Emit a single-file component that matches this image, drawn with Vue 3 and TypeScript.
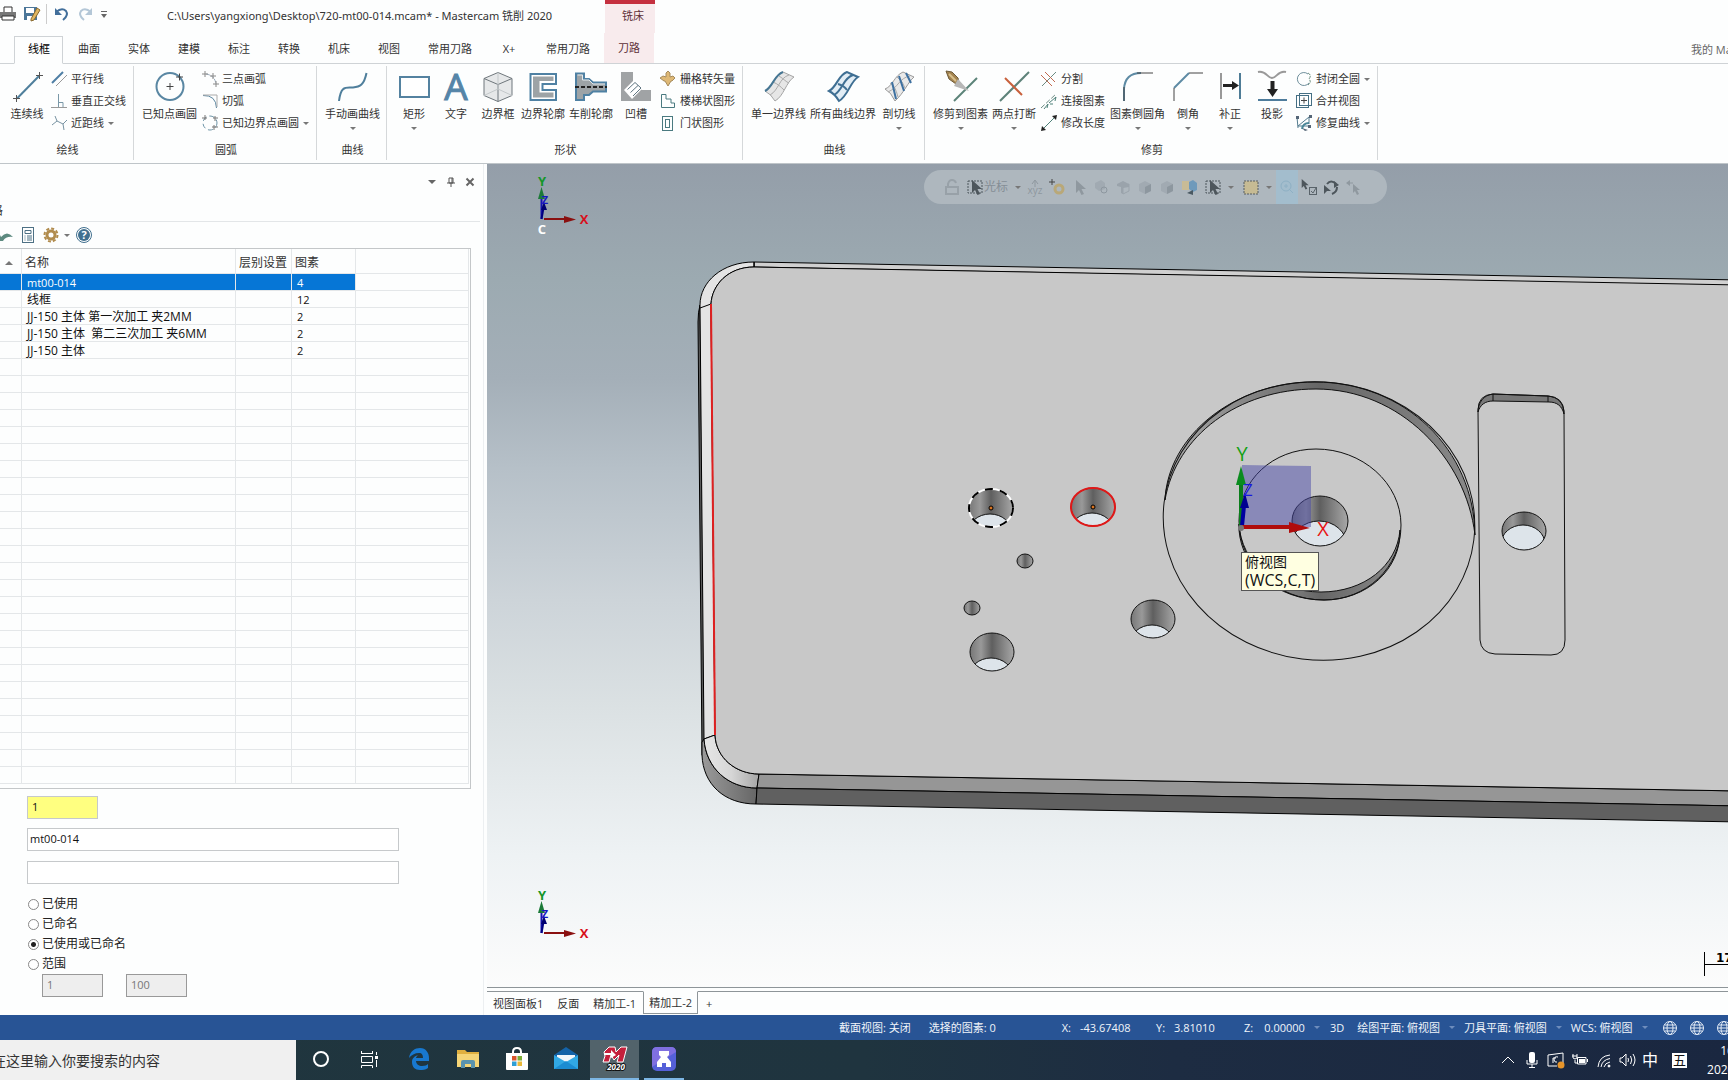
<script setup lang="ts">
import { ref } from 'vue'

interface Tool {
  label: string
  icon: string
  menu?: boolean
}
interface Block {
  kind: 'big' | 'stack'
  tools: Tool[]
}
interface Group {
  name: string
  blocks: Block[]
}

const glyphs: Record<string, string> = {
  line: '<path d="M6 28.500L28 6" stroke="#4f7f9c" stroke-width="2"/><path d="M28.500 2v7M25 5.500h7M5.500 25v7M2 28.500h7" stroke="#555"/>',
  circle: '<circle cx="16" cy="16.500" r="13.500" stroke="#5a87a3" stroke-width="2"/><path d="M16 13v7M12.500 16.500h7M25.500 3.500v7M22 7h7" stroke="#444"/>',
  spline: '<path d="M2 31C4 15 9 18 16 17.500S27 15 29.500 3" stroke="#4f7f9c" stroke-width="2"/>',
  rect: '<rect x="2" y="7" width="29" height="20" stroke="#5482a0" stroke-width="2" fill="#fff"/>',
  letter: '<text x="16" y="30" font-size="37" text-anchor="middle" font-family="Open Sans, sans-serif" fill="#5585a8" stroke="#5585a8">A</text>',
  cube: '<path d="M16 2.500L30 8.500V25.500L16 31.500L2 25.500V8.500Z" fill="#e6e8e9" stroke="#6f777c"/><path d="M2 8.500L16 14.500L30 8.500M16 14.500V31.500" stroke="#6f777c"/><path d="M2 25.500L16 19L30 25.500M16 2.500V19" stroke="#c3c8ca"/>',
  contour: '<path d="M3.500 4H29V14H15.500V20H29V30H3.500Z" fill="#fff" stroke="#4f81a3" stroke-width="2"/><path d="M6 6.500H26.500V11H12.500V22.500H26.500V27.500H6Z" fill="#9da3a6"/>',
  lathe: '<path d="M1 3.500H9V9H14L18 12.500H31V21.500H18L14 25H9V30H1Z" fill="#9da3a6" stroke="#4f81a3" stroke-width="2"/><path d="M2.500 5H7.500V10H14L18 14H30" stroke="#e4e9ec"/><path d="M0 17H32" stroke="#222" stroke-width="2" stroke-dasharray="4 2"/>',
  pocket: '<path d="M1 2H13V12L22 20H31V31H1Z" fill="#a0a3a5"/><path d="M4 20L15 9L24 17L12 29Z" fill="#fff"/><path d="M7.500 19.500L15 12.500M10.500 22.500L18 15.500M13 26L21 18M15 12.500l6 5.500" stroke="#5e7480"/>',
  edgeOne: '<path d="M2 21C10 17 11 5 20 2L31 7C23 12 21 26 12 31Q8 24 2 21Z" fill="#e6e6e6" stroke="#a4a4a4"/><path d="M7 25C16 20 16 8 26 5M10 12C15 14 18 17 21 20M16 6C21 9 23 12 26 13" stroke="#aaa"/><path d="M2 21C10 17 11 5 20 2" stroke="#467693" stroke-width="2"/>',
  edgeAll: '<path d="M2 21C10 17 11 5 20 2L31 7C23 12 21 26 12 31Q8 24 2 21Z" fill="#e2edf5" stroke="#3f6f93" stroke-width="2"/><path d="M7 25C16 20 16 8 26 5M11 14C15 15 18 17 20 20" stroke="#3f6f93" stroke-width="2"/>',
  slice: '<path d="M2 19C10 16 11 6 20 2L31 7C25 12 21 23 12 31Q8 22 2 19Z" fill="#e9e9e9" stroke="#9a9a9a"/><path d="M5 22C16 17 16 8 27 6M7 13Q12 15 15 27M14 7Q20 11 22 18" stroke="#aaa"/><path d="M9 12L13 29M16 6L21 21M23 3L28 13" stroke="#3d70a0" stroke-width="2"/>',
  trim: '<path d="M9 31L32 8" stroke="#5b8378" stroke-width="2"/><path d="M1 1L7 2L13 8L14 12L11 14L4 9Z" fill="#a48450" stroke="#6d5a38"/><path d="M13 9L24 21L9 16Z" fill="#b7b7b7"/><path d="M4 4L11 11" stroke="#d8c08c" stroke-width="2"/>',
  snap: '<path d="M2 31L31 2" stroke="#5d8279" stroke-width="2"/><path d="M7 8L24 25" stroke="#c8603c" stroke-width="2"/>',
  fillet: '<path d="M2 31V19Q3 3 19 3" stroke="#5e8ba4" stroke-width="2"/><path d="M2 31V17M15 3H31" stroke="#444"/>',
  chamfer: '<path d="M2 18L17 3" stroke="#5e8ba4" stroke-width="2"/><path d="M2 31V18M17 3H31" stroke="#444"/>',
  offset: '<path d="M7 3V29" stroke="#999" stroke-width="2"/><path d="M26 3V29" stroke="#4e7c96" stroke-width="2"/><path d="M9 14H18V11L25 15.500L18 20V17H9Z" fill="#222"/>',
  project: '<path d="M2 2C10 0 11 8 16 8S22 0 30 2" stroke="#999" stroke-width="2"/><path d="M14.500 11H18.500V19H22L16.500 27L11 19H14.500Z" fill="#222"/><path d="M2 30H31" stroke="#4e7c9c" stroke-width="2"/>',
  parallel: '<path d="M1 12L12 1" stroke="#4e7fa5" stroke-width="2"/><path d="M5 15L16 4" stroke="#999"/>',
  perp: '<path d="M0 14.500H16" stroke="#999"/><path d="M7.500 1V14M7.500 9.500H12V14" stroke="#7a98a8"/>',
  near: '<path d="M4 1L6 6L1 10M6 6L12 9M16 5L12 9L13 15" stroke="#7893a2"/>',
  arc3: '<path d="M4 3C10 4 13 7 14 13" stroke="#9ab" stroke-dasharray="4 1"/><path d="M3 0v6M0 3h6M11 2v6M8 5h6M14 10v6M11 13h6" stroke="#888"/>',
  tangent: '<path d="M1 2.500Q14 2 14.500 15" stroke="#5b86a0"/><path d="M1 2H15V14" stroke="#aaa"/>',
  edgeCircle: '<circle cx="8" cy="8" r="7" stroke="#6f95a8" stroke-dasharray="5 3"/><path d="M3 0v5M0 3h5M13 1v5M11 3h5M12 10v5M10 12h6" stroke="#777"/>',
  raster: '<path d="M8 0L10 2V6L13 5L15 7L12 10H11L8 15L5 10H4L0 7L3 5L6 6V2Z" fill="#dfb976" stroke="#a68b5c"/>',
  stairs: '<path d="M1.500 1.500V14.500H14.500V10H11V6H6V1.500Z" stroke="#4a7a80"/>',
  door: '<rect x="2.500" y="1.500" width="10" height="14" stroke="#4a7a80"/><rect x="5.500" y="4.500" width="4" height="8" stroke="#4a7a80"/>',
  divide: '<path d="M1 15L15 1" stroke="#6c8b82"/><path d="M0 4L11 15M4 1L14 11" stroke="#c0694f"/>',
  join: '<path d="M0 15L15 1" stroke="#6c8b82" stroke-dasharray="5 2"/><path d="M3 16L7 11L6 15M8 10L15 4L14 8M9 11H12" stroke="#4d8078"/>',
  length: '<path d="M2 14L14 2" stroke="#4d8078"/><path d="M0 16L1 11L5 15ZM16 0L11 1L15 5Z" fill="#222"/>',
  closeArc: '<path d="M12 3A6.500 6.500 0 1 0 13 12" stroke="#6f8f9c"/><path d="M12 2Q16 4 13 8Q16 11 12 14" stroke="#6c8f80" stroke-dasharray="3 1"/>',
  merge: '<rect x=".5" y="2.500" width="12" height="12" stroke="#456f84"/><rect x="3.500" y=".5" width="12" height="12" stroke="#456f84"/><path d="M8 4.500v6M5 7.500h6" stroke="#444"/>',
  repair: '<path d="M1 2L2 13M2 11L13 2V9M2 11H13" stroke="#557d90"/><path d="M6 14Q7 8 13 8" stroke="#4a8698" stroke-width="2"/><path d="M0 1h3v3h-3zM13 0h3v3h-3zM12 10h3v3h-3zM6 13l6 2l-3 1z" fill="#567"/>',
}

const groups: Group[] = [
  {
    name: '绘线',
    blocks: [
      { kind: 'big', tools: [{ label: '连续线', icon: 'line' }] },
      { kind: 'stack', tools: [{ label: '平行线', icon: 'parallel' }, { label: '垂直正交线', icon: 'perp' }, { label: '近距线', icon: 'near', menu: true }] },
    ],
  },
  {
    name: '圆弧',
    blocks: [
      { kind: 'big', tools: [{ label: '已知点画圆', icon: 'circle' }] },
      { kind: 'stack', tools: [{ label: '三点画弧', icon: 'arc3' }, { label: '切弧', icon: 'tangent' }, { label: '已知边界点画圆', icon: 'edgeCircle', menu: true }] },
    ],
  },
  { name: '曲线', blocks: [{ kind: 'big', tools: [{ label: '手动画曲线', icon: 'spline', menu: true }] }] },
  {
    name: '形状',
    blocks: [
      {
        kind: 'big',
        tools: [
          { label: '矩形', icon: 'rect', menu: true },
          { label: '文字', icon: 'letter' },
          { label: '边界框', icon: 'cube' },
          { label: '边界轮廓', icon: 'contour' },
          { label: '车削轮廓', icon: 'lathe' },
          { label: '凹槽', icon: 'pocket' },
        ],
      },
      { kind: 'stack', tools: [{ label: '栅格转矢量', icon: 'raster' }, { label: '楼梯状图形', icon: 'stairs' }, { label: '门状图形', icon: 'door' }] },
    ],
  },
  {
    name: '曲线',
    blocks: [
      {
        kind: 'big',
        tools: [
          { label: '单一边界线', icon: 'edgeOne' },
          { label: '所有曲线边界', icon: 'edgeAll' },
          { label: '剖切线', icon: 'slice', menu: true },
        ],
      },
    ],
  },
  {
    name: '修剪',
    blocks: [
      { kind: 'big', tools: [{ label: '修剪到图素', icon: 'trim', menu: true }, { label: '两点打断', icon: 'snap', menu: true }] },
      { kind: 'stack', tools: [{ label: '分割', icon: 'divide' }, { label: '连接图素', icon: 'join' }, { label: '修改长度', icon: 'length' }] },
      {
        kind: 'big',
        tools: [
          { label: '图素倒圆角', icon: 'fillet', menu: true },
          { label: '倒角', icon: 'chamfer', menu: true },
          { label: '补正', icon: 'offset', menu: true },
          { label: '投影', icon: 'project' },
        ],
      },
      { kind: 'stack', tools: [{ label: '封闭全圆', icon: 'closeArc', menu: true }, { label: '合并视图', icon: 'merge' }, { label: '修复曲线', icon: 'repair', menu: true }] },
    ],
  },
]

const tabs = ['线框', '曲面', '实体', '建模', '标注', '转换', '机床', '视图', '常用刀路', 'X+', '常用刀路', '刀路']

const levels = [
  { name: 'mt00-014', count: 4 },
  { name: '线框', count: 12 },
  { name: 'JJ-150 主体 第一次加工 夹2MM', count: 2 },
  { name: 'JJ-150 主体  第二三次加工 夹6MM', count: 2 },
  { name: 'JJ-150 主体', count: 2 },
]
const blankRows = 25

const filters = ['已使用', '已命名', '已使用或已命名', '范围']
const filter = ref('已使用或已命名')
const levelNumber = ref('1')
const levelName = ref('mt00-014')
const levelSet = ref('')

const sheets = ['视图面板1', '反面', '精加工-1', '精加工-2']

const holes = [
  { cx: 991, cy: 508, rx: 22, ry: 19, drop: 25 },
  { cx: 1093, cy: 507, rx: 22, ry: 19, drop: 25 },
  { cx: 1025, cy: 561, rx: 8, ry: 7, drop: 20 },
  { cx: 972, cy: 608, rx: 8, ry: 7, drop: 20 },
  { cx: 992, cy: 652, rx: 22, ry: 19, drop: 25 },
  { cx: 1153, cy: 619, rx: 22, ry: 19, drop: 25 },
  { cx: 1320, cy: 521, rx: 28, ry: 25, drop: 25 },
  { cx: 1524, cy: 531, rx: 22, ry: 19, drop: 13 },
]

const cursor = '<path d="M5 1V14L8 11L10.500 16L13 15L10.500 10H15Z" fill="currentColor"/>'
const box = '<rect x="1" y="2" width="14" height="12" stroke="currentColor" stroke-dasharray="2 1"/>'
const solid = '<path d="M2 5L8 2L14 5V12L8 15L2 12Z" fill="#a1aab2"/><path d="M8 8L14 5V12L8 15Z" fill="#8d979f"/>'
const picks = [
  { name: '锁定', cls: 'faint first', svg: '<path d="M2 8H14V15H2ZM4 8V5Q5 1 8 1T12 4" stroke="#98a1a8" stroke-width="2"/>' },
  { name: '光标', cls: 'dark', svg: box + cursor, text: '光标', menu: true },
  { name: '坐标', cls: 'faint', svg: '<path d="M8 2V8M5 5L8 1L11 5" stroke="currentColor"/><text x="8" y="15" font-size="10" text-anchor="middle" fill="currentColor">xyz</text>' },
  { name: '选项', cls: '', svg: '<path d="M3 0V6M0 3H6" stroke="#444"/><circle cx="10" cy="10" r="4" stroke="#b9a878" stroke-width="3"/>' },
  { name: '选择', cls: 'faint', svg: cursor },
  { name: '实体一', cls: 'faint', svg: '<path d="M2 4L8 1L12 4V10L6 12L2 9Z" fill="#a1aab2"/><circle cx="11" cy="11" r="3" stroke="#8d979f"/>' },
  { name: '实体二', cls: 'faint', svg: '<path d="M2 5L8 2L14 5V8L8 9V15L6 14V8L2 7Z" fill="#9aa3ab"/><path d="M8 8L14 5V12L8 15Z" stroke="#9aa3ab"/>' },
  { name: '实体三', cls: 'faint', svg: solid },
  { name: '实体四', cls: 'faint', svg: solid },
  { name: '着色', cls: '', svg: '<path d="M1 2H8V11H1Z" fill="#c8bb96"/><path d="M8 3L12 1L16 4V11L12 13L8 10Z" fill="#6f9abb"/><path d="M6 14L12 11V16Z" fill="#4a5962"/>' },
  { name: '窗选', cls: 'dark wide', svg: box + cursor, menu: true },
  { name: '区域', cls: 'wide', svg: '<rect x="1" y="2" width="14" height="13" fill="#c6bb94" stroke="#555d63" stroke-dasharray="2 1"/>', menu: true },
  { name: '预览', cls: 'lit', svg: '<circle cx="7" cy="7" r="5" stroke="#8eb0c4"/><path d="M5 7H9M7 5V9M10 10L14 14" stroke="#8eb0c4"/>' },
  { name: '验证', cls: 'dark', svg: '<g transform="scale(.7) translate(-4 -1)">' + cursor + '</g><rect x="8.500" y="8.500" width="7" height="7" stroke="#59636a"/><path d="M10 12L12 14L15 9" stroke="#59636a"/>' },
  { name: '反选', cls: 'dark', svg: '<path d="M4 5Q8 0 13 5M14 8Q14 13 9 15" stroke="currentColor" stroke-width="2"/><path d="M1 6V15L4 12L8 12ZM11 2L16 6L11 9Z" fill="currentColor"/>' },
  { name: '上次', cls: 'faint', svg: '<path d="M1 4L5 1V7ZM8 5V14L10 12L12 16L14 15L12 11H15Z" fill="currentColor"/><path d="M4 4H8" stroke="currentColor"/>' },
]
const globe = '<circle cx="8" cy="8" r="6.500"/><ellipse cx="8" cy="8" rx="3" ry="6.500"/><path d="M1.500 8H14.500M2.500 5H13.500M2.500 11H13.500"/>'
</script>

<template>
  <div class="app">
    <header class="head">
      <div class="title-row">
        <div class="quick">
          <button class="bare" aria-label="打印"><svg viewBox="0 0 16 16"><path d="M4 6V1H12V6" stroke="#333" fill="#fff" /><path d="M0 6H16V12H0Z" fill="#777" /><path d="M2 10H14V14H2Z" fill="#fff" stroke="#333" /></svg></button>
          <button class="bare" aria-label="另存为"><svg viewBox="0 0 16 16"><path d="M1 1H14V14H1Z" fill="#4b7699" /><path d="M3 2H11V7H3ZM4 10H9V14H4Z" fill="#fff" /><path d="M8 13L14 2L17 4L11 14L8 15Z" fill="#e0b660" stroke="#896b30" /></svg></button>
          <i class="bar"></i>
          <button class="bare" aria-label="撤销"><svg viewBox="0 0 16 16"><path d="M2 6Q8 1 12 5Q15 9 9 14" stroke="#426f9b" stroke-width="2" /><path d="M1 2V9H8Z" fill="#426f9b" /></svg></button>
          <button class="bare" aria-label="重做"><svg viewBox="0 0 16 16"><path d="M14 6Q8 1 4 5Q1 9 7 14" stroke="#b4c7d7" stroke-width="2" /><path d="M15 2V9H8Z" fill="#b4c7d7" /></svg></button>
          <button class="bare small" aria-label="自定义"><svg viewBox="0 0 8 8"><path d="M1 1.500H7" stroke="#666" /><path d="M1 4H7L4 8Z" fill="#666" /></svg></button>
        </div>
        <h1>C:\Users\yangxiong\Desktop\720-mt00-014.mcam* - Mastercam 铣削 2020</h1>
        <div class="context">铣床</div>
      </div>
      <nav class="tabs">
        <button v-for="(t, i) in tabs" :key="i" :class="{ active: i === 0, pink: i === 11 }">{{ t }}</button>
        <a href="#" class="mine">我的 Mastercam</a>
      </nav>
    </header>

    <div class="ribbon">
      <section v-for="(g, gi) in groups" :key="gi" class="group">
        <div class="tools">
          <div v-for="(b, bi) in g.blocks" :key="bi" :class="b.kind">
            <button v-for="t in b.tools" :key="t.label">
              <svg :viewBox="b.kind === 'big' ? '0 0 32 32' : '0 0 16 16'" v-html="glyphs[t.icon]"></svg>
              <span>{{ t.label }}</span>
              <i v-if="t.menu" class="drop"></i>
            </button>
          </div>
        </div>
        <h2>{{ g.name }}</h2>
      </section>
    </div>

    <main class="work">
      <aside class="panel">
        <div class="panel-top">
          <button class="bare tiny" aria-label="菜单"><svg viewBox="0 0 10 10"><path d="M1 3H9L5 7Z" fill="#666" /></svg></button>
          <button class="bare tiny" aria-label="固定"><svg viewBox="0 0 10 10"><path d="M3 1V6H7V1ZM1 6H9M5 6V10M6 1V6" stroke="#555" /></svg></button>
          <button class="bare tiny" aria-label="关闭"><svg viewBox="0 0 10 10"><path d="M1.500 1.500L8.500 8.500M8.500 1.500L1.500 8.500" stroke="#666" stroke-width="2" /></svg></button>
        </div>
        <div class="panel-title">格</div>
        <div class="panel-tools">
          <button class="bare" aria-label="返回"><svg viewBox="0 0 16 16"><path d="M2 6V14H6Q9 9 16 10Q10 3 4 10Z" fill="#5d8a80" /></svg></button>
          <button class="bare list" aria-label="列表"><svg viewBox="0 0 16 16"><rect x="2.500" y=".5" width="11" height="15" stroke="#4d7084" /><path d="M5 3.500H11V6.500H5ZM4.500 9H5.500M7 9H12M4.500 11H5.500M7 11H12M4.500 13H5.500M7 13H12" stroke="#4d7084" /></svg></button>
          <button class="bare" aria-label="选项"><svg viewBox="0 0 16 16"><circle cx="8" cy="8" r="4" stroke="#b18c4e" stroke-width="3" /><circle cx="8" cy="8" r="6.500" stroke="#b18c4e" stroke-width="2" stroke-dasharray="3 2" /></svg></button>
          <i class="drop"></i>
          <button class="bare help" aria-label="帮助"><svg viewBox="0 0 16 16"><circle cx="8" cy="8" r="7.500" fill="#fff" stroke="#41708f" /><circle cx="8" cy="8" r="6" fill="#41708f" /><text x="8" y="12" text-anchor="middle" font-size="11" font-weight="700" fill="#fff" font-family="Open Sans, sans-serif">?</text></svg></button>
        </div>
        <div class="levels">
          <table>
            <colgroup><col class="c0" /><col class="c1" /><col class="c2" /><col class="c3" /><col /></colgroup>
            <thead>
              <tr>
                <th><svg class="sort" viewBox="0 0 8 6"><path d="M0 5H8L4 1Z" fill="#777" /></svg></th>
                <th>名称</th>
                <th>层别设置</th>
                <th>图素</th>
                <th></th>
              </tr>
            </thead>
            <tbody>
              <tr v-for="(l, i) in levels" :key="l.name" :class="{ picked: i === 0 }">
                <td></td>
                <td class="name">{{ l.name }}</td>
                <td></td>
                <td class="num">{{ l.count }}</td>
                <td></td>
              </tr>
              <tr v-for="n in blankRows" :key="n"><td></td><td></td><td></td><td></td><td></td></tr>
            </tbody>
          </table>
        </div>
        <form class="form" @submit.prevent>
          <input v-model="levelNumber" class="number" aria-label="编号" />
          <input v-model="levelName" aria-label="名称" />
          <input v-model="levelSet" aria-label="层别设置" />
          <div class="radios">
            <label v-for="f in filters" :key="f"><input v-model="filter" type="radio" name="filter" :value="f" />{{ f }}</label>
          </div>
          <div class="range">
            <input value="1" disabled aria-label="从" />
            <input value="100" disabled aria-label="到" />
          </div>
        </form>
      </aside>

      <section class="stage">
        <div class="view">
          <svg class="scene" viewBox="487 164 1241 824" preserveAspectRatio="xMinYMin slice">
            <defs>
              <linearGradient id="bore"><stop offset="0" stop-color="#777" /><stop offset=".25" stop-color="#999" /><stop offset=".5" stop-color="#5f5f5f" /><stop offset="1" stop-color="#a8a8a8" /></linearGradient>
              <linearGradient id="wall"><stop offset="0" stop-color="#aaa" /><stop offset=".5" stop-color="#666" /><stop offset="1" stop-color="#8a8a8a" /></linearGradient>
              <linearGradient id="corner"><stop offset="0" stop-color="#e6e6e6" /><stop offset=".5" stop-color="#d6d6d6" /><stop offset="1" stop-color="#a6a6a6" /></linearGradient>
              <linearGradient id="side"><stop offset="0" stop-color="#9a9a9a" /><stop offset="1" stop-color="#666" /></linearGradient>
              <clipPath v-for="(h, i) in holes" :id="'hole' + i" :key="i"><ellipse :cx="h.cx" :cy="h.cy" :rx="h.rx" :ry="h.ry" /></clipPath>
              <g id="axes">
                <path d="M541.500 219V197" stroke="#1414b0" stroke-width="2" />
                <path d="M541.500 187L538 199H545Z" fill="#1b7a38" />
                <path d="M541.500 219L544 205" stroke="#000080" stroke-width="2" />
                <path d="M544 202L541 210H547Z" fill="#000070" />
                <path d="M544 219H566" stroke="#8a1010" stroke-width="2" />
                <path d="M576 219.500L564 216V223Z" fill="#8a1010" />
                <g font-family="Open Sans, sans-serif" font-weight="700" font-size="13" text-anchor="middle">
                  <text x="542" y="186" fill="#149628">Y</text>
                  <text x="584" y="224" fill="#d8101c">X</text>
                  <text x="545" y="204" font-size="11" fill="#1515c0">Z</text>
                </g>
              </g>
            </defs>

            <g stroke="#000" fill="none">
              <path d="M698 322Q698 312 700 305L705 738Q705 760 715 773L702 755Z" fill="#5c5c5c" />
              <path d="M754 262L1740 280V286L754 267Z" fill="#d0d0d0" />
              <path d="M754 262C722 262 700 282 700 305L704 739L715 735L711 304C712 285 728 267 754 267Z" fill="#e4e4e4" />
              <path d="M702 755C703 784 724 804 756 804L757 788C728 788 706 768 704 739L702 742Z" fill="url(#side)" />
              <path d="M704 739C706 768 728 788 757 788L759 774C736 774 716 758 715 735Z" fill="url(#corner)" />
              <path d="M759 774L1740 791V806L757 788Z" fill="#969696" />
              <path d="M757 788L1740 806V822L756 804Z" fill="#606060" />
              <path d="M754 267L1740 285V791L759 774C736 774 716 758 715 735L711 304C712 285 728 267 754 267Z" fill="#c8c8c8" />
              <path d="M700 308L711 304M754 262V267" />
            </g>
            <path d="M711 304L715 735" stroke="#e02020" stroke-width="2" />

            <g stroke="#111" fill="none">
              <path d="M1165 500C1168 435 1235 382 1315 382C1405 382 1474 450 1475 535C1466 458 1400 389 1316 389C1238 389 1176 436 1165 500Z" fill="url(#wall)" />
              <ellipse cx="1319" cy="521" rx="156" ry="139" transform="rotate(7 1319 521)" />
              <path d="M1239 524C1241 562 1275 592 1321 592C1364 592 1397 566 1400 530C1401 570 1366 600 1324 600C1276 600 1242 568 1239 530Z" fill="url(#wall)" />
              <path d="M1239 521C1239 480 1273 449 1316 449C1362 449 1401 483 1401 525C1401 568 1366 600 1324 600C1277 600 1239 565 1239 521Z" />
              <path d="M1478 412C1478 402 1484 395 1493 394L1548 396C1558 397 1564 403 1564 414C1562 406 1557 402 1549 402L1493 401C1485 401 1480 405 1478 412Z" fill="#777" />
              <path d="M1493 394L1548 396Q1563 397 1564 411L1565 640Q1565 655 1551 655L1495 654Q1481 653 1480 640L1478 410Q1478 395 1493 394ZM1493 394V401M1548 396V402" />
            </g>

            <g v-for="(h, i) in holes" :key="i" :clip-path="'url(#hole' + i + ')'">
              <ellipse :cx="h.cx" :cy="h.cy" :rx="h.rx" :ry="h.ry" fill="url(#bore)" />
              <ellipse :cx="h.cx - 1" :cy="h.cy + h.drop" :rx="h.rx" :ry="h.ry" fill="#dde4ea" stroke="#111" />
            </g>
            <ellipse v-for="(h, i) in holes" :key="'r' + i" :cx="h.cx" :cy="h.cy" :rx="h.rx" :ry="h.ry" fill="none" stroke="#111" />
            <ellipse cx="991" cy="508" rx="22" ry="19" fill="none" stroke="#fff" stroke-width="2" />
            <ellipse cx="991" cy="508" rx="22" ry="19" fill="none" stroke="#000" stroke-width="2" stroke-dasharray="8 7" />
            <ellipse cx="1093" cy="507" rx="22" ry="19" fill="none" stroke="#e01818" stroke-width="2" />
            <circle cx="991" cy="508" r="2" fill="#d9731f" stroke="#000" />
            <circle cx="1093" cy="507" r="2" fill="#d9731f" stroke="#000" />

            <path d="M1242 465L1311 466V527H1242Z" fill="#4646a8" fill-opacity=".48" />
            <path d="M1241 526V484" stroke="#0a7d1a" stroke-width="4" />
            <path d="M1241 466L1236 485H1246Z" fill="#0a8c1e" />
            <path d="M1242 526L1244 506" stroke="#0000a0" stroke-width="4" />
            <path d="M1245 493L1240 508H1249Z" fill="#000090" />
            <path d="M1242 527H1292" stroke="#b00c0c" stroke-width="4" />
            <path d="M1310 528L1289 522V533Z" fill="#b00c0c" />
            <circle cx="1241" cy="528" r="3" fill="#777" />
            <g font-family="Open Sans, sans-serif" text-anchor="middle">
              <text x="1242" y="461" font-size="20" fill="#12a012">Y</text>
              <text x="1323" y="536" font-size="20" fill="#e81414">X</text>
              <text x="1248" y="496" font-size="16" fill="#1818e0">Z</text>
            </g>

            <use href="#axes" />
            <use href="#axes" y="714" />
            <text x="542" y="234" font-family="Open Sans, sans-serif" font-weight="700" font-size="13" text-anchor="middle" fill="#fff">C</text>
            <path d="M1704.500 952V976M1704.500 964.500H1740" stroke="#000" />
            <text x="1716" y="962" font-family="DejaVu Sans, sans-serif" font-weight="700" font-size="12" fill="#000">175.000</text>
          </svg>
          <div class="tip">俯视图<br /><span>(WCS,C,T)</span></div>
          <div class="picks">
            <button v-for="p in picks" :key="p.name" :class="p.cls" :aria-label="p.name">
              <svg viewBox="0 0 16 16" v-html="p.svg"></svg>
              <span v-if="p.text">{{ p.text }}</span>
              <i v-if="p.menu" class="drop"></i>
            </button>
          </div>
        </div>
        <div class="sheets">
          <button v-for="s in sheets" :key="s" :class="{ on: s === '精加工-2' }">{{ s }}</button>
          <button class="add">+</button>
        </div>
      </section>
    </main>

    <footer class="status">
      <span class="section">截面视图: 关闭</span>
      <span class="chosen">选择的图素: 0</span>
      <span class="axis">X:</span><span class="vx">-43.67408</span>
      <span class="axis">Y:</span><span class="vy">3.81010</span>
      <span class="axis">Z:</span><span class="vz">0.00000</span>
      <i class="drop"></i>
      <span class="dim">3D</span>
      <span>绘图平面: 俯视图</span><i class="drop"></i>
      <span>刀具平面: 俯视图</span><i class="drop"></i>
      <span>WCS: 俯视图</span><i class="drop"></i>
      <span class="globes"><svg v-for="n in 3" :key="n" viewBox="0 0 16 16" v-html="globe"></svg></span>
    </footer>

    <div class="taskbar">
      <div class="search"><input placeholder="在这里输入你要搜索的内容" aria-label="搜索" /></div>
      <button aria-label="Cortana"><svg viewBox="0 0 24 24"><circle cx="12" cy="12" r="7" stroke="#fff" stroke-width="2" /></svg></button>
      <button aria-label="任务视图"><svg viewBox="0 0 24 24"><path d="M3.500 4V7M14.500 4V7M3.500 6.500H14.500M3.500 9.500H14.500V15.500H3.500ZM3.500 21V18.500H14.500V21M18.500 5V8M18.500 13V20" stroke="#fff" /><path d="M17 9H20V12H17Z" fill="#fff" /></svg></button>
      <button aria-label="Edge"><svg viewBox="0 0 24 24"><path d="M2 11C3 4 8 1 13 1C19 1 22 6 22 11V14H9C9 17 12 19 15 19C18 19 20 18 21 17V21C18 23 16 23 13 23C8 23 5 20 5 15C5 11 8 9 11 8C9 10 9 11 9 11H16C16 8 15 6 12 6C8 6 4 8 2 11Z" fill="#1878cf" /></svg></button>
      <button aria-label="文件资源管理器"><svg viewBox="0 0 24 24"><path d="M1 3H9L11 5H23V20H1Z" fill="#e0b040" /><path d="M1 7H23V20H1Z" fill="#f5d577" /><path d="M5 21V15Q5 13 7 13H17Q19 13 19 15V21H15V17H9V21Z" fill="#5a93ae" /></svg></button>
      <button aria-label="应用商店"><svg viewBox="0 0 24 24"><path d="M8 7V5Q8 1 12 1T16 5V7" stroke="#fff" stroke-width="2" /><path d="M1 6H23V22Q23 23 22 23H2Q1 23 1 22Z" fill="#fff" /><path d="M7 9H11.500V13.500H7Z" fill="#d8552c" /><path d="M12.500 9H17V13.500H12.500Z" fill="#7bac35" /><path d="M7 14.500H11.500V19H7Z" fill="#2f9fd6" /><path d="M12.500 14.500H17V19H12.500Z" fill="#eab93a" /></svg></button>
      <button aria-label="邮件"><svg viewBox="0 0 24 24"><path d="M0 8L12 0L24 8V22H0Z" fill="#1463a8" /><path d="M3 8H21V16H3Z" fill="#f2f6fa" /><path d="M0 8L12 15L24 8V22H0Z" fill="#31a8e4" /><path d="M0 22L12 14L24 22Z" fill="#1b8cd2" /></svg></button>
      <button class="on" aria-label="Mastercam"><svg viewBox="0 0 24 24"><path d="M1 5L6 0H12L13 5L18 0H24L20 15H14L16 8L11 13L8 8L6 15H0L2 9Z" fill="#c4203c" stroke="#fff" /><path d="M1 6H8V3L13 8L8 11V8H1Z" fill="#fff" /><text x="13" y="23" text-anchor="middle" font-size="8" font-weight="700" font-style="italic" font-family="Open Sans, sans-serif" fill="#fff" stroke="#111" stroke-width="2" paint-order="stroke">2020</text></svg></button>
      <button class="run" aria-label="应用"><svg viewBox="0 0 24 24"><rect width="24" height="24" rx="5" fill="#5560d8" /><path d="M0 5Q0 0 5 0H19Q24 0 24 5L0 20Z" fill="#7f6fe0" /><path d="M7 4H17V8L15 10L19 15V20H14V16H10V20H5V15L9 10L7 8Z" fill="#fff" /></svg></button>
      <div class="tray">
        <svg viewBox="0 0 16 16"><path d="M2 11L8 5L14 11" /></svg>
        <svg viewBox="0 0 16 16"><rect x="5" y="0" width="6" height="11" rx="2" fill="#fff" stroke="none" /><path d="M3 8V12H13V8M8 12V15M5 15.500H11" /></svg>
        <svg viewBox="0 0 16 16"><path d="M0 3L15 1V12M0 3V14H9M5 6V11M5 6H8M10 5Q6 4 6 8Q7 11 9 10" /><circle cx="13" cy="13" r="3.500" fill="#e8952a" stroke="none" /></svg>
        <svg viewBox="0 0 16 16"><path d="M0 4H5M1 2V6Q3 8 5 6V2M3 8V11H5M5.500 5.500H14V12H5.500ZM15.500 7V10" /><path d="M7 7H13V11H7Z" fill="#fff" stroke="none" /></svg>
        <svg viewBox="0 0 16 16"><path d="M2 15Q3 4 14 3M5 15Q6 8 14 6.500M8 15Q9 11 14 10" /><circle cx="13" cy="14" r="1" fill="#fff" /></svg>
        <svg viewBox="0 0 16 16"><path d="M0 6H2L6 2V14L2 10H0ZM8 6Q9 8 8 10M10.500 4Q13 8 10.500 12M13 2Q17 8 13 14" /></svg>
        <span class="ime">中</span>
        <span class="wubi">五</span>
        <time>16:30<br />2020/5/20</time>
      </div>
    </div>
  </div>
</template>

<style>
body {
  margin: 0;
}
</style>

<style scoped>
.app {
  display: flex;
  flex-direction: column;
  min-height: 100vh;
  overflow: hidden;
  background: #fdfefe;
  color: #333;
  font: 11px/16px "Open Sans", "Noto Sans CJK SC", sans-serif;
}
.app * {
  box-sizing: border-box;
}
button {
  border: 0;
  padding: 0;
  background: none;
  color: inherit;
  font: inherit;
  white-space: nowrap;
}
svg {
  display: block;
  fill: none;
  overflow: visible;
}
h1,
h2 {
  margin: 0;
  font: inherit;
}
.bare {
  width: 16px;
  height: 16px;
  flex: none;
}
.bare.small {
  width: 8px;
  height: 8px;
}
.bare.tiny {
  width: 10px;
  height: 10px;
}
.drop {
  flex: none;
  width: 0;
  height: 0;
  border: 3px solid transparent;
  border-top: 3px solid #777;
  border-bottom: 0;
}

.title-row {
  display: flex;
  height: 33px;
}
.quick {
  display: flex;
  align-items: center;
  gap: 7px;
  width: 167px;
  height: 28px;
}
.quick .bar {
  width: 1px;
  height: 20px;
  background: #ccc;
}
h1 {
  width: 438px;
  font-family: "Noto Sans", "Noto Sans CJK SC", sans-serif;
  line-height: 32px;
  white-space: nowrap;
}
.context {
  width: 50px;
  padding-left: 6px;
  border-top: 4px solid #c5303f;
  background: #f8ebed;
  color: #5e3038;
  text-align: center;
  line-height: 24px;
}
.tabs {
  display: flex;
  height: 31px;
  padding-left: 14px;
  border-bottom: 1px solid #cfd3d6;
}
.tabs button {
  min-width: 46px;
  height: 31px;
  padding: 0 14px;
}
.tabs .active {
  height: 28px;
  margin: 3px 1px 0 0;
  padding: 0 12px 2px 13px;
  border: 1px solid #cfd3d6;
  border-bottom-color: #fdfefe;
  background: #fdfefe;
  color: #000;
}
.tabs .pink {
  height: 30px;
  background: #f8ebed;
  color: #5e3038;
}
.mine {
  width: 37px;
  margin-left: auto;
  color: #666;
  line-height: 34px;
  text-decoration: none;
  white-space: nowrap;
}

.ribbon {
  display: flex;
  height: 100px;
  padding: 2px 0 3px;
  border-bottom: 1px solid #bfc5c9;
}
.group {
  flex: none;
  padding: 0 4px 0 6px;
  border-right: 1px solid #d5d8da;
}
.tools {
  display: flex;
  height: 76px;
}
.big {
  display: flex;
  padding-top: 4px;
}
.big button {
  display: flex;
  flex-direction: column;
  align-items: center;
  min-width: 42px;
  height: 64px;
  padding: 0 2px;
}
.big svg {
  width: 32px;
  height: 32px;
}
.big span {
  margin-top: 4px;
}
.big .drop {
  margin-top: 5px;
}
.stack {
  display: flex;
  flex-direction: column;
  margin: 2px 3px 0 3px;
}
.stack button {
  display: flex;
  align-items: center;
  gap: 4px;
  height: 22px;
}
.stack svg {
  width: 16px;
  height: 16px;
}
.group h2 {
  text-align: center;
}

.work {
  display: flex;
  flex: 1;
}
.panel {
  display: flex;
  flex-direction: column;
  flex: none;
  width: 484px;
  border-right: 1px solid #eceff1;
  overflow: hidden;
}
.panel-top {
  display: flex;
  justify-content: flex-end;
  gap: 9px;
  padding: 13px 8px 0 0;
}
.panel-title {
  height: 35px;
  margin: 0 3px 0 -9px;
  padding-top: 16px;
  border-bottom: 1px solid #e3e6e8;
  font-size: 12px;
}
.panel-tools {
  display: flex;
  align-items: center;
  height: 26px;
  margin-left: -3px;
}
.panel-tools .list {
  margin: 0 7px;
}
.panel-tools .drop {
  margin: 0 6px 0 5px;
}
.levels {
  width: 471px;
  height: 541px;
  border: 1px solid #c4c7c9;
  border-left: 0;
  font-size: 12px;
}
table {
  width: 469px;
  table-layout: fixed;
  border-spacing: 0;
  color: #111;
}
.c0 {
  width: 22px;
}
.c1 {
  width: 214px;
}
.c2 {
  width: 56px;
}
.c3 {
  width: 64px;
}
th,
td {
  height: 17px;
  padding: 2px 0 0 3px;
  border: solid #e4e7e9;
  border-width: 0 1px 1px 0;
  text-align: left;
  font-weight: 400;
  line-height: 14px;
  white-space: pre;
}
th {
  height: 25px;
  padding-top: 4px;
  color: #333;
}
.sort {
  width: 8px;
  height: 6px;
  margin-left: 2px;
}
.name,
.num {
  padding-left: 5px;
}
.picked td,
.num {
  font-size: 11px;
}
.picked td:not(:last-child) {
  background: #0676d6;
  color: #fff;
}
.form {
  display: flex;
  flex-direction: column;
  padding: 7px 0 17px 27px;
}
.form input:not([type='radio']) {
  width: 372px;
  height: 23px;
  margin-bottom: 10px;
  padding: 0 2px 3px;
  border: 1px solid #c6c9cb;
  background: #fff;
  color: #111;
  font: 11px "Open Sans", sans-serif;
}
.form .number:not([type='radio']) {
  width: 71px;
  margin-bottom: 9px;
  padding-left: 4px;
  background: #ffff80;
}
.radios label {
  display: flex;
  align-items: center;
  height: 20px;
  color: #222;
  font-size: 12px;
}
.radios input {
  appearance: none;
  width: 11px;
  height: 11px;
  margin: 0 3px 0 1px;
  border: 1px solid #888;
  border-radius: 50%;
  background: #fff;
}
.radios input:checked {
  background: radial-gradient(circle, #222 2px, #fff 3px);
}
.range {
  display: flex;
  gap: 23px;
  padding-left: 15px;
}
.range input:not([type='radio']) {
  width: 61px;
  margin: 0;
  padding-left: 4px;
  border-color: #999;
  background: #eee;
  color: #777;
}

.stage {
  display: flex;
  flex: 1;
  flex-direction: column;
  min-width: 0;
  padding-left: 3px;
}
.view {
  position: relative;
  flex: 1;
  overflow: hidden;
  background: linear-gradient(#949ea9, #9caab1 14%, #a4afb8 26%, #b6c0c8 37%, #cdd4d9 53%, #dbe1e3 66%, #eef2f4 84%, #fcfcfc);
}
.scene {
  position: absolute;
  inset: 0;
  width: 100%;
  height: 100%;
}
.tip {
  position: absolute;
  top: 388px;
  left: 754px;
  padding: 0 3px;
  border: 1px solid #555;
  background: #ffffe1;
  color: #111;
  font-size: 14px;
  line-height: 18px;
}
.tip span {
  font-size: 16px;
}
.picks {
  position: absolute;
  top: 6px;
  left: 437px;
  display: flex;
  align-items: center;
  width: 463px;
  height: 34px;
  padding-left: 17px;
  border-radius: 17px;
  background: #aeb7be;
}
.picks button {
  display: flex;
  align-items: center;
  justify-content: center;
  min-width: 22px;
  height: 34px;
}
.picks svg {
  width: 16px;
  height: 16px;
}
.picks span {
  margin: 0 7px 0 1px;
  color: #858e96;
  font-size: 12px;
}
.picks .drop {
  margin: 0 3px 0 0;
}
.picks .wide {
  width: 38px;
}
.picks .wide .drop {
  margin: 0 0 0 7px;
}
.picks .first {
  margin-right: 4px;
}
.picks .faint {
  color: #8f989f;
}
.picks .dark {
  color: #4d565c;
}
.picks .lit {
  background: #a3bdcd;
}
.sheets {
  position: relative;
  display: flex;
  height: 24px;
  margin-top: 3px;
  border-top: 1px solid #8e9599;
  box-shadow: 0 -3px 0 #fdfefe, 0 -4px 0 #8e9599;
}
.sheets button {
  height: 23px;
  padding: 0 7px;
  line-height: 22px;
}
.sheets button:first-child {
  padding-left: 6px;
}
.sheets .on {
  margin-top: -1px;
  padding: 0 5px;
  border: 1px solid #8e9599;
  border-top-color: #fdfefe;
}
.sheets .add {
  padding: 0 8px;
}

.status {
  display: flex;
  align-items: center;
  gap: 9px;
  height: 25px;
  padding-left: 839px;
  overflow: hidden;
  background: #285495;
  color: #f0f4fa;
  white-space: nowrap;
}
.status span {
  flex: none;
}
.status .section {
  margin-right: 9px;
}
.status .chosen {
  width: 124px;
}
.status .vx {
  width: 67px;
}
.status .vy {
  width: 61px;
}
.status .vz {
  margin-left: 2px;
}
.status .drop {
  border-top-color: #6e8dbd;
}
.status .dim {
  margin: 0 4px 0 1px;
}
.globes {
  display: flex;
  gap: 11px;
  margin-left: 5px;
}
.globes svg {
  width: 16px;
  height: 16px;
  stroke: #e4ecf6;
}

.taskbar {
  display: flex;
  height: 40px;
  overflow: hidden;
  background: linear-gradient(90deg, #20363e, #1f343f 50%, #1d2c42 68%, #1a2740);
}
.search {
  flex: none;
  width: 296px;
  overflow: hidden;
  background: #f0f0f0;
}
.search input {
  width: 304px;
  height: 40px;
  margin-left: -8px;
  padding: 0;
  border: 0;
  background: none;
  font: 14px "Noto Sans CJK SC", sans-serif;
}
.search input::placeholder {
  color: #333;
}
.taskbar button {
  flex: none;
  display: grid;
  place-items: center;
  width: 49px;
  height: 40px;
  border-bottom: 2px solid transparent;
}
.taskbar button svg {
  width: 24px;
  height: 24px;
}
.taskbar .on {
  border-color: #7db6e4;
  background: #52636b;
}
.taskbar .run {
  width: 40px;
  margin-left: 5px;
  border-color: #7db6e4;
}
.tray {
  display: flex;
  align-items: center;
  gap: 8px;
  width: 228px;
  margin-left: auto;
  color: #fff;
}
.tray svg {
  flex: none;
  width: 16px;
  height: 16px;
  stroke: #fff;
}
.ime {
  margin-left: -2px;
  font-size: 16px;
}
.wubi {
  flex: none;
  width: 15px;
  height: 15px;
  margin: 0 12px 0 6px;
  background: #fff;
  color: #111;
  font-size: 13px;
  line-height: 14px;
  text-align: center;
}
time {
  flex: none;
  font-size: 12px;
  line-height: 19px;
  text-align: center;
  white-space: nowrap;
}
</style>
